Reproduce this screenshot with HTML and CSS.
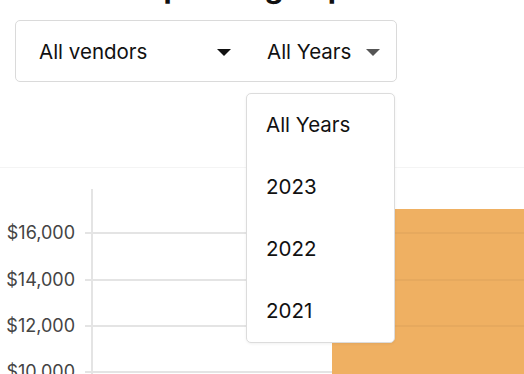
FILE: index.html
```html
<!DOCTYPE html>
<html>
<head>
<meta charset="utf-8">
<link rel="stylesheet" href="styles.css">
</head>
<body>
<div class="page">
  <h2 class="title">Vendor Spending Report</h2>
  <div class="filters">
    <div class="select vendor">
      <span>All vendors</span>
      <span class="caret dark"></span>
    </div>
    <div class="select years">
      <span>All Years</span>
      <span class="caret grey"></span>
    </div>
  </div>
  <div class="chart">
    <svg width="524" height="206" viewBox="0 0 524 206">
      <g stroke="#e4e4e4" stroke-width="2">
        <line x1="85" y1="65" x2="524" y2="65"/>
        <line x1="85" y1="112" x2="524" y2="112"/>
        <line x1="85" y1="158" x2="524" y2="158"/>
        <line x1="85" y1="204" x2="524" y2="204"/>
        <line x1="92" y1="21" x2="92" y2="206"/>
      </g>
      <rect x="332" y="41" width="192" height="170" fill="#efb062"/>
      <g stroke="#000" stroke-opacity="0.035" stroke-width="2">
        <line x1="332" y1="65" x2="524" y2="65"/>
        <line x1="332" y1="112" x2="524" y2="112"/>
        <line x1="332" y1="158" x2="524" y2="158"/>
      </g>
      <g class="axis-label" text-anchor="end">
        <text x="75" y="71">$16,000</text>
        <text x="75" y="118">$14,000</text>
        <text x="75" y="164">$12,000</text>
        <text x="75" y="210">$10,000</text>
      </g>
    </svg>
  </div>
  <ul class="menu">
    <li>All Years</li>
    <li>2023</li>
    <li>2022</li>
    <li>2021</li>
  </ul>
</div>
</body>
</html>
```
FILE: styles.css
```css
html, body {
  margin: 0;
  padding: 0;
  background: #fff;
  overflow: hidden;
}
.page {
  position: relative;
  display: flow-root;
  width: 524px;
  height: 374px;
  font-family: Inter, "Noto Sans", sans-serif;
  color: #111;
}
.title {
  margin: -30px 0 0 30px;
  height: 35px;
  font-size: 30px;
  line-height: 35px;
  font-weight: 700;
  white-space: nowrap;
}
.filters {
  margin: 15px 0 0 15px;
  width: 380px;
  height: 59px;
  padding-top: 1px;
  box-sizing: content-box;
  border: 1px solid #dadada;
  border-radius: 5px;
  display: flex;
  align-items: center;
}
.select {
  display: flex;
  align-items: center;
  font-size: 20.5px;
}
.vendor {
  padding-left: 23px;
  width: 192px;
  justify-content: space-between;
}
.years {
  margin-left: 36px;
  gap: 15px;
}
.caret {
  width: 0;
  height: 0;
  border-left: 7.5px solid transparent;
  border-right: 7.5px solid transparent;
  border-top: 7px solid #111;
  margin-top: 1px;
}
.caret.grey {
  border-top-color: #555;
}
.chart {
  margin-top: 85px;
  border-top: 1px solid #f4f4f4;
  height: 206px;
}
.chart svg {
  display: block;
}
.axis-label {
  font-family: Inter, "Noto Sans", sans-serif;
  font-size: 18px;
  fill: #444;
}
.menu {
  position: absolute;
  left: 246px;
  top: 93px;
  width: 147px;
  height: 248px;
  margin: 0;
  padding: 0;
  list-style: none;
  background: #fff;
  border: 1px solid #dcdcdc;
  border-radius: 5px;
  box-shadow: 0 1px 3px rgba(0,0,0,0.06);
}
.menu li {
  height: 62px;
  line-height: 61px;
  padding-left: 19px;
  font-size: 20.5px;
  color: #111;
}
```
